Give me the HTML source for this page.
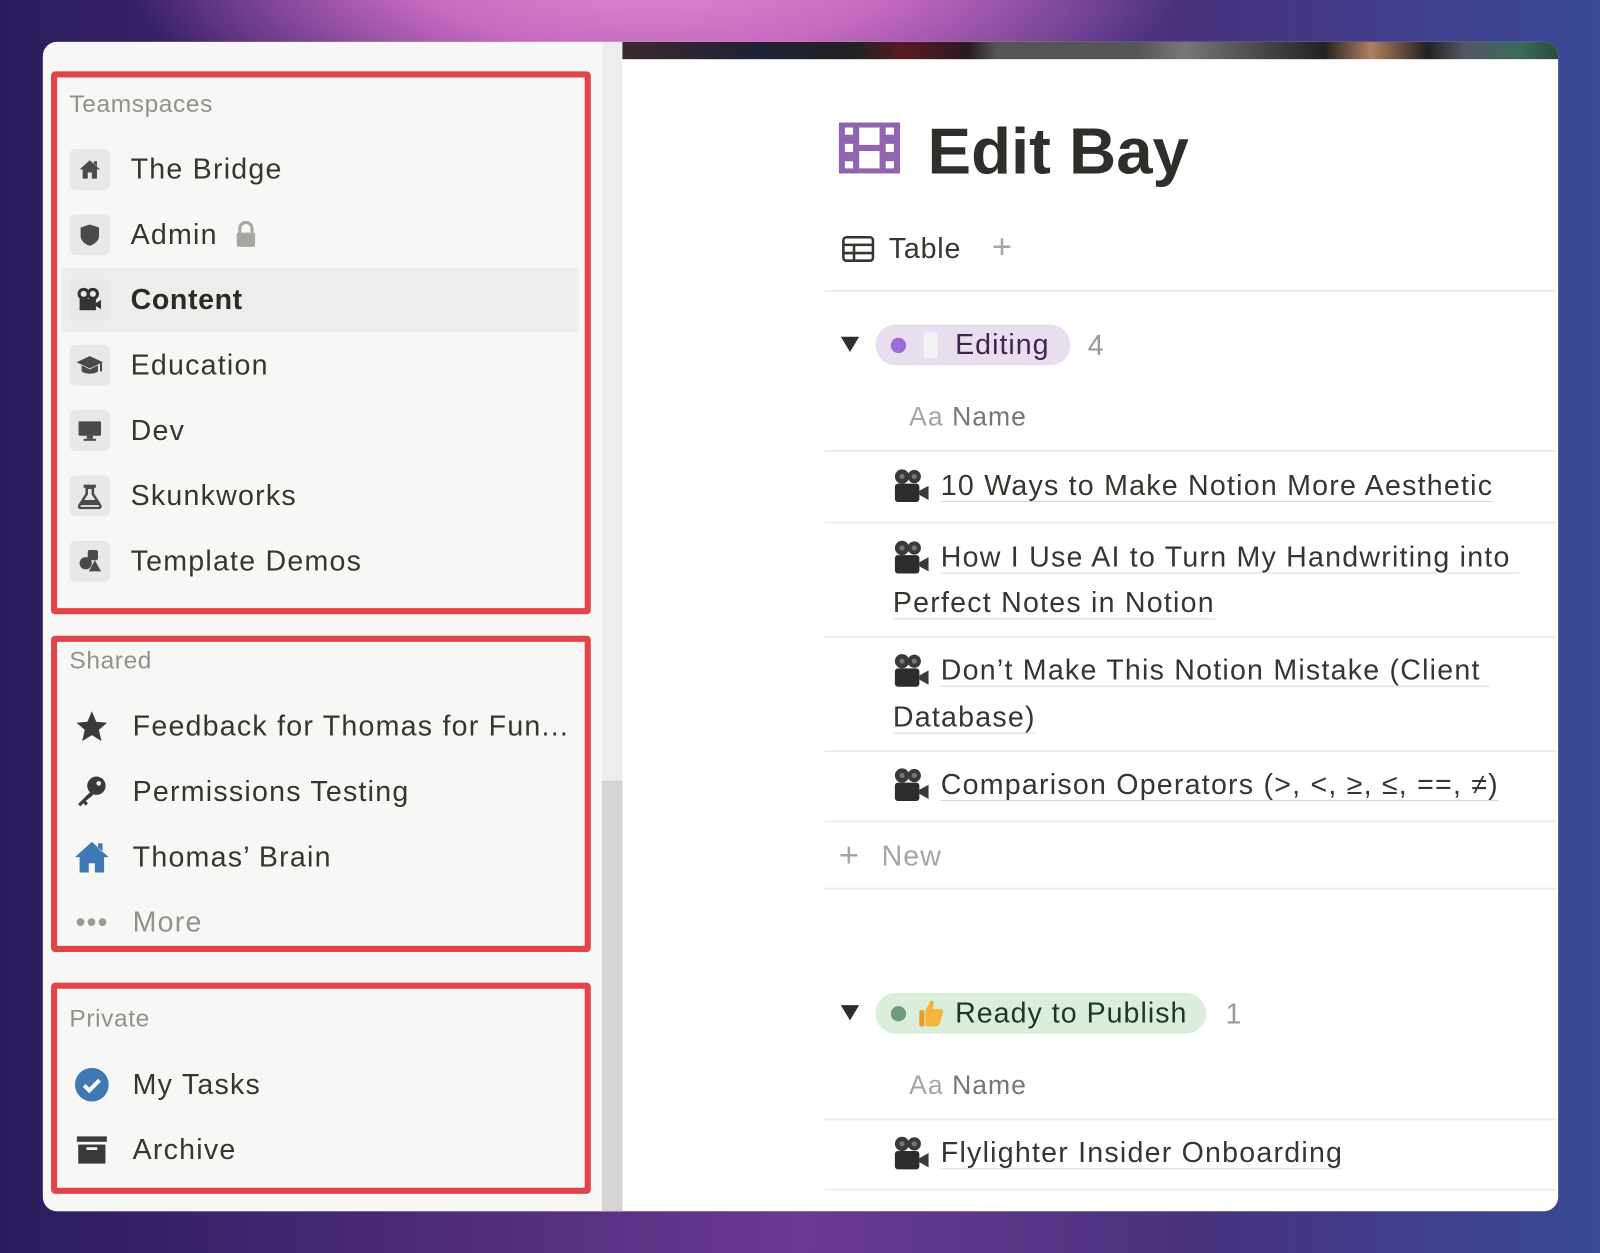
<!DOCTYPE html>
<html><head><meta charset="utf-8"><style>
*{margin:0;padding:0;box-sizing:border-box}
html,body{width:1600px;height:1253px;overflow:hidden}
body{background:#2a1f5c;font-family:"Liberation Sans",sans-serif}
#s{position:absolute;left:0;top:0;width:1568px;height:1228px;transform:scale(1.0204);transform-origin:0 0;
background:radial-gradient(ellipse 700px 260px at 640px -40px,#e08fd0 0%,#c76bc0 35%,rgba(120,60,150,0) 75%),
linear-gradient(90deg,#2a1c5c 0%,#4a2a78 25%,#6a3a90 50%,#48327e 75%,#3a4a96 100%);}
.a{position:absolute;white-space:nowrap}
#card{position:absolute;left:42px;top:41px;width:1485px;height:1146px;border-radius:14px;overflow:hidden;background:#fff}
#side{position:absolute;left:0;top:0;width:548px;height:100%;background:#f7f7f5}
#scroll{position:absolute;left:548px;top:0;width:20px;height:100%;background:#ededeb}
#thumb{position:absolute;left:548px;top:724px;width:20px;height:430px;background:#d5d5d3}
#cover{position:absolute;left:568px;top:0;width:917px;height:17px;background:linear-gradient(90deg,#3a2830 0%,#1e2236 15%,#222 25%,#5a1a22 30%,#2a1a20 37%,#555 40%,#555 55%,#777 60%,#4a4a4a 68%,#222 75%,#b08060 80%,#222 86%,#556 90%,#3a6a5a 96%,#2a4a3a 100%)}
.box{position:absolute;border:6px solid #e2444b;border-radius:4px}
.lbl{position:absolute;font-size:24px;color:#91918e;line-height:30px;letter-spacing:0.6px}
.it{position:absolute;font-size:28px;color:#37352f;line-height:40px;height:40px;letter-spacing:1.2px;white-space:nowrap}
.ib{position:absolute;width:40px;height:40px;border-radius:6px;background:#e8e8e6;display:flex;align-items:center;justify-content:center}
.txt{font-size:28px;color:#37352f;line-height:44px;letter-spacing:1.2px}
.ul{border-bottom:1.5px solid #d8d8d6}
.hr{position:absolute;left:808px;width:717px;height:2px;background:#ececeb}
</style></head><body><div id="s">
<div id="card">
<div id="side"></div><div id="scroll"></div><div id="thumb"></div><div id="cover"></div>
</div>
<div style="position:absolute;left:60px;top:263px;width:507px;height:62px;background:#ededec"></div>
<div class="box" style="left:50px;top:70px;width:529px;height:532px"></div>
<div class="box" style="left:50px;top:623px;width:529px;height:310px"></div>
<div class="box" style="left:50px;top:963px;width:529px;height:207px"></div>

<div class="lbl" style="left:68px;top:88px">Teamspaces</div>
<div class="ib" style="left:68px;top:146px"><svg width="24" height="24" viewBox="0 0 24 24"><path d="M12 3L2 12h3v9h5v-6h4v6h5v-9h3z M16 4h3v5l-3-3z" fill="#4a4a48"/></svg></div>
<div class="it" style="left:128px;top:146px">The Bridge</div>
<div class="ib" style="left:68px;top:210px"><svg width="22" height="24" viewBox="0 0 22 24"><path d="M11 2L20 5v8c0 5-4 8-9 10C6 21 2 18 2 13V5z" fill="#4a4a48"/></svg></div>
<div class="it" style="left:128px;top:210px">Admin</div>
<svg class="a" style="left:230px;top:216px" width="22" height="28" viewBox="0 0 22 28"><path d="M5 12V8a6 6 0 0112 0v4" stroke="#a5a5a2" stroke-width="3" fill="none"/><rect x="2" y="12" width="18" height="14" rx="2" fill="#a5a5a2"/></svg>
<div class="ib" style="left:68px;top:274px"><svg width="26" height="24" viewBox="0 0 26 24"><circle cx="7" cy="6" r="4.5" fill="none" stroke="#333" stroke-width="3"/><circle cx="16" cy="6" r="4.5" fill="none" stroke="#333" stroke-width="3"/><rect x="3" y="11" width="16" height="11" fill="#333"/><path d="M19 15l5-3v9l-5-3z" fill="#333"/></svg></div>
<div class="it" style="left:128px;top:274px;font-weight:bold;color:#2b2a26;letter-spacing:0.6px">Content</div>
<div class="ib" style="left:68px;top:338px"><svg width="28" height="24" viewBox="0 0 28 24"><path d="M14 3L1 9l13 6 13-6z" fill="#4a4a48"/><path d="M6 12v6c3 3 13 3 16 0v-6l-8 4z" fill="#4a4a48"/><path d="M25 10v8" stroke="#4a4a48" stroke-width="2"/></svg></div>
<div class="it" style="left:128px;top:338px">Education</div>
<div class="ib" style="left:68px;top:402px"><svg width="26" height="24" viewBox="0 0 26 24"><rect x="2" y="3" width="22" height="14" rx="1" fill="#4a4a48"/><rect x="10" y="17" width="6" height="3" fill="#4a4a48"/><rect x="7" y="20" width="12" height="2" fill="#4a4a48"/></svg></div>
<div class="it" style="left:128px;top:402px">Dev</div>
<div class="ib" style="left:68px;top:466px"><svg width="24" height="26" viewBox="0 0 24 26"><rect x="6" y="2" width="12" height="3" fill="#4a4a48"/><path d="M9 5h6v6l7 11c1 2 0 3-2 3H4c-2 0-3-1-2-3l7-11z" fill="none" stroke="#4a4a48" stroke-width="2.5"/><path d="M5 17h14l2 5H3z" fill="#4a4a48"/></svg></div>
<div class="it" style="left:128px;top:466px">Skunkworks</div>
<div class="ib" style="left:68px;top:530px"><svg width="26" height="26" viewBox="0 0 26 26"><rect x="11" y="2" width="10" height="10" rx="2" fill="#4a4a48"/><circle cx="9" cy="15" r="6" fill="#4a4a48"/><path d="M18 12l6 11H12z" fill="#4a4a48"/></svg></div>
<div class="it" style="left:128px;top:530px">Template Demos</div>

<div class="lbl" style="left:68px;top:633px">Shared</div>
<svg class="a" style="left:72px;top:694px" width="36" height="36" viewBox="0 0 24 24"><path d="M12 2l2.9 6.9 7.1.6-5.4 4.7 1.7 7.3L12 17.6 5.7 21.5l1.7-7.3L2 9.5l7.1-.6z" fill="#3a3a38"/></svg>
<div class="it" style="left:130px;top:692px">Feedback for Thomas for Fun...</div>
<svg class="a" style="left:72px;top:758px" width="36" height="36" viewBox="0 0 24 24"><circle cx="15" cy="8" r="6" fill="#3a3a38"/><path d="M11 12L3 20l1.5 1.5 2-2 1.5 1.5 1.5-1.5-1.5-1.5L13 14z" fill="#3a3a38"/><circle cx="16.5" cy="6.5" r="1.5" fill="#f7f7f5"/></svg>
<div class="it" style="left:130px;top:756px">Permissions Testing</div>
<svg class="a" style="left:72px;top:822px" width="36" height="36" viewBox="0 0 24 24"><path d="M12 2L1 12h3v10h6v-6h4v6h6V12h3z M16 3h3v6l-3-3z" fill="#3e79b6"/></svg>
<div class="it" style="left:130px;top:820px">Thomas’ Brain</div>
<div class="a" style="left:74px;top:884px;font-size:28px;color:#9a9a97;line-height:40px;letter-spacing:1px">•••</div>
<div class="it" style="left:130px;top:884px;color:#91918e">More</div>

<div class="lbl" style="left:68px;top:984px">Private</div>
<svg class="a" style="left:72px;top:1045px" width="36" height="36" viewBox="0 0 24 24"><circle cx="12" cy="12" r="11" fill="#3e79b6"/><path d="M7 12.5l3.3 3.3L17 9" stroke="#fff" stroke-width="2.6" fill="none"/></svg>
<div class="it" style="left:130px;top:1043px">My Tasks</div>
<svg class="a" style="left:74px;top:1111px" width="32" height="32" viewBox="0 0 24 24"><rect x="1" y="2" width="22" height="4" fill="#3a3a38"/><rect x="2" y="8" width="20" height="14" fill="#3a3a38"/><rect x="8" y="10" width="8" height="2" fill="#f7f7f5"/></svg>
<div class="it" style="left:130px;top:1107px">Archive</div>

<svg class="a" style="left:822px;top:120px" width="60" height="50" viewBox="0 0 60 50"><rect width="60" height="50" fill="#9065b0"/><g fill="#fff"><rect x="6" y="5" width="8" height="7"/><rect x="6" y="21" width="8" height="8"/><rect x="6" y="38" width="8" height="7"/><rect x="46" y="5" width="8" height="7"/><rect x="46" y="21" width="8" height="8"/><rect x="46" y="38" width="8" height="7"/><rect x="20" y="5" width="20" height="17"/><rect x="20" y="28" width="20" height="17"/></g></svg>
<div class="a" style="left:909px;top:108px;font-size:64px;font-weight:bold;color:#2f2e2a;line-height:80px">Edit Bay</div>
<svg class="a" style="left:825px;top:231px" width="32" height="26" viewBox="0 0 32 26"><rect x="1.5" y="1.5" width="29" height="23" rx="3" fill="none" stroke="#37352f" stroke-width="2.5"/><path d="M1.5 9h29M1.5 17h29M12 9v16" stroke="#37352f" stroke-width="2.5"/></svg>
<div class="a" style="left:871px;top:224px;font-size:28px;color:#37352f;line-height:40px;letter-spacing:0.8px">Table</div>
<div class="a" style="left:972px;top:222px;font-size:34px;color:#a5a5a2;line-height:40px;font-weight:300">+</div>
<div class="hr" style="top:284px"></div>

<div class="a" style="left:824px;top:330px;width:0;height:0;border-left:9px solid transparent;border-right:9px solid transparent;border-top:15px solid #2f2e2a"></div>
<div class="a" style="left:858px;top:318px;width:191px;height:40px;border-radius:20px;background:#e8deee"></div>
<div class="a" style="left:873px;top:331px;width:15px;height:15px;border-radius:50%;background:#9a6dd7"></div>
<div class="a" style="left:905px;top:325px;width:14px;height:26px;border-radius:3px;background:#f4f1f6"></div>
<div class="a" style="left:936px;top:318px;font-size:28px;color:#412454;line-height:40px;letter-spacing:1px">Editing</div>
<div class="a" style="left:1066px;top:319px;font-size:28px;color:#9b9a97;line-height:40px">4</div>
<div class="a" style="left:891px;top:388px;font-size:26px;color:#a5a5a2;line-height:40px;letter-spacing:1px">Aa <span style="color:#787774">Name</span></div>
<div class="hr" style="top:441px"></div>

<svg width="0" height="0" style="position:absolute"><defs><g id="cam"><circle cx="10" cy="8" r="7" fill="#3a3a3c"/><circle cx="22" cy="8" r="6.5" fill="#3a3a3c"/><circle cx="10" cy="8" r="2.5" fill="#777"/><circle cx="22" cy="8" r="2.5" fill="#777"/><rect x="3" y="15" width="24" height="18" rx="3" fill="#2c2c2e"/><path d="M27 22l9-5v14l-9-5z" fill="#3a3a3c"/></g></defs></svg>

<svg class="a" style="left:874px;top:459px" width="38" height="36" viewBox="0 0 38 36"><use href="#cam"/></svg>
<div class="a txt" style="left:922px;top:454px"><span class="ul">10 Ways to Make Notion More Aesthetic</span></div>
<div class="hr" style="top:511px"></div>
<svg class="a" style="left:874px;top:529px" width="38" height="36" viewBox="0 0 38 36"><use href="#cam"/></svg>
<div class="a txt" style="left:922px;top:524px"><span class="ul">How I Use AI to Turn My Handwriting into&nbsp;</span></div>
<div class="a txt" style="left:875px;top:569px"><span class="ul">Perfect Notes in Notion</span></div>
<div class="hr" style="top:623px"></div>
<svg class="a" style="left:874px;top:640px" width="38" height="36" viewBox="0 0 38 36"><use href="#cam"/></svg>
<div class="a txt" style="left:922px;top:635px"><span class="ul">Don’t Make This Notion Mistake (Client&nbsp;</span></div>
<div class="a txt" style="left:875px;top:681px"><span class="ul">Database)</span></div>
<div class="hr" style="top:735px"></div>
<svg class="a" style="left:874px;top:752px" width="38" height="36" viewBox="0 0 38 36"><use href="#cam"/></svg>
<div class="a txt" style="left:922px;top:747px"><span class="ul">Comparison Operators (&gt;, &lt;, ≥, ≤, ==, ≠)</span></div>
<div class="hr" style="top:804px"></div>
<div class="a" style="left:822px;top:817px;font-size:34px;color:#a5a5a2;line-height:42px;font-weight:300">+</div>
<div class="a" style="left:864px;top:819px;font-size:28px;color:#a5a5a2;line-height:40px;letter-spacing:1px">New</div>
<div class="hr" style="top:870px"></div>

<div class="a" style="left:824px;top:985px;width:0;height:0;border-left:9px solid transparent;border-right:9px solid transparent;border-top:15px solid #2f2e2a"></div>
<div class="a" style="left:858px;top:973px;width:324px;height:40px;border-radius:20px;background:#dbeddb"></div>
<div class="a" style="left:873px;top:986px;width:15px;height:15px;border-radius:50%;background:#6c9b7d"></div>
<svg class="a" style="left:899px;top:978px" width="28" height="30" viewBox="0 0 28 30"><path d="M8 12l5-9c2-1 4 0 3 3l-1 5h8c2 0 3 2 2 4l-3 10c-1 2-2 3-4 3H8z" fill="#f4b63a"/><rect x="2" y="12" width="5" height="16" rx="1" fill="#e89a2c"/></svg>
<div class="a" style="left:936px;top:973px;font-size:28px;color:#1c3829;line-height:40px;letter-spacing:1px">Ready to Publish</div>
<div class="a" style="left:1201px;top:974px;font-size:28px;color:#9b9a97;line-height:40px">1</div>
<div class="a" style="left:891px;top:1043px;font-size:26px;color:#a5a5a2;line-height:40px;letter-spacing:1px">Aa <span style="color:#787774">Name</span></div>
<div class="hr" style="top:1096px"></div>
<svg class="a" style="left:874px;top:1113px" width="38" height="36" viewBox="0 0 38 36"><use href="#cam"/></svg>
<div class="a txt" style="left:922px;top:1108px"><span class="ul">Flylighter Insider Onboarding</span></div>
<div class="hr" style="top:1165px"></div>
</div></body></html>
